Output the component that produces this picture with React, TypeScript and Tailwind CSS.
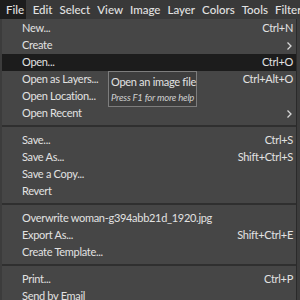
import React from "react";

type Item =
  | { kind: "item"; label: string; shortcut?: string; sub?: boolean; active?: boolean }
  | { kind: "sep" };

const menus = ["File", "Edit", "Select", "View", "Image", "Layer", "Colors", "Tools", "Filters"];

const items: Item[] = [
  { kind: "item", label: "New...", shortcut: "Ctrl+N" },
  { kind: "item", label: "Create", sub: true },
  { kind: "item", label: "Open...", shortcut: "Ctrl+O", active: true },
  { kind: "item", label: "Open as Layers...", shortcut: "Ctrl+Alt+O" },
  { kind: "item", label: "Open Location..." },
  { kind: "item", label: "Open Recent", sub: true },
  { kind: "sep" },
  { kind: "item", label: "Save...", shortcut: "Ctrl+S" },
  { kind: "item", label: "Save As...", shortcut: "Shift+Ctrl+S" },
  { kind: "item", label: "Save a Copy..." },
  { kind: "item", label: "Revert" },
  { kind: "sep" },
  { kind: "item", label: "Overwrite woman-g394abb21d_1920.jpg" },
  { kind: "item", label: "Export As...", shortcut: "Shift+Ctrl+E" },
  { kind: "item", label: "Create Template..." },
  { kind: "sep" },
  { kind: "item", label: "Print...", shortcut: "Ctrl+P" },
  { kind: "item", label: "Send by Email" },
];

const Chevron = () => (
  <svg width="7" height="10" viewBox="0 0 7 10" fill="none">
    <path d="M1.5 1.5 L5 5 L1.5 8.5" stroke="#d8d8d8" strokeWidth="1.3" />
  </svg>
);

export default function App() {
  return (
    <div
      className="relative h-[300px] w-[300px] overflow-hidden bg-[#3c3c3c] text-[11px] tracking-[-0.3px] text-[#e2e2e2]"
      style={{ fontFamily: 'Lato, "Noto Sans", sans-serif' }}
    >
      <div className="flex h-[19px] items-center whitespace-nowrap bg-[#393939] text-[11.5px] font-medium tracking-normal">
        {menus.map((m, i) => (
          <div
            key={m}
            className={`flex h-full shrink-0 items-center ${
              i === 0 ? "bg-[#1d1d1d] pl-[6px] pr-[2px]" : i === 1 ? "ml-[3px] px-[3.5px]" : "px-[3.5px]"
            }`}
          >
            {m}
          </div>
        ))}
      </div>

      <div className="ml-[2px] w-[295px] border-r border-[#2a2a2a] bg-[#464646] pb-4">
        <div className="h-[1px]" />
        {items.map((it, i) =>
          it.kind === "sep" ? (
            <div key={i} className="h-[10px] pt-[3px]">
              <div className="h-[2px] bg-[#2f2f2f]" />
            </div>
          ) : (
            <div
              key={i}
              className={`flex h-[17px] items-center justify-between pl-[20px] pr-[3px] ${
                it.active ? "bg-[#1c1c1c]" : ""
              }`}
            >
              <span className="whitespace-nowrap">{it.label}</span>
              {it.shortcut && <span>{it.shortcut}</span>}
              {it.sub && <Chevron />}
            </div>
          )
        )}
      </div>

      <div className="absolute left-[108px] top-[71px] w-[89px] border border-[#7d7d7d] bg-[#3e3e3e] px-[2px] py-[2px] text-[#e2e2e2]">
        <div className="whitespace-nowrap text-[11px] leading-[16px]">Open an image file</div>
        <div className="whitespace-nowrap pt-[2px] text-right text-[9.5px] italic leading-[12px] tracking-[-0.2px] text-[#cfcfcf]">
          Press F1 for more help
        </div>
      </div>
    </div>
  );
}
